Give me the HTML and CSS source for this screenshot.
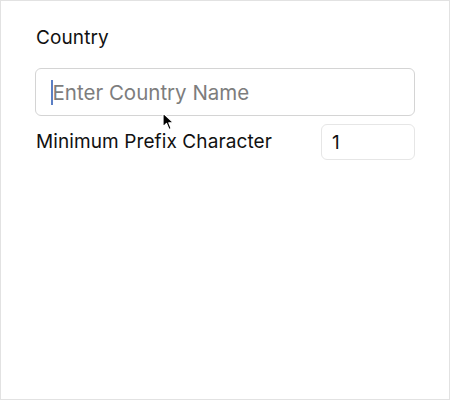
FILE: index.html
```html
<!DOCTYPE html>
<html>
<head>
<meta charset="utf-8">
<link rel="stylesheet" href="styles.css">
</head>
<body>
<div class="frame">
  <div class="form">
    <label class="label">Country</label>
    <div class="input main-input">
      <span class="caret"></span>
      <span class="placeholder">Enter Country Name</span>
    </div>
    <div class="row">
      <span class="label">Minimum Prefix Character</span>
      <div class="input small-input">1</div>
    </div>
  </div>
  <svg class="pointer" width="14" height="20" viewBox="0 0 14 20">
    <path d="M1 1 L1 15 L4.5 11.5 L7 17.5 L9.2 16.6 L6.8 10.8 L11.5 10.8 Z" fill="#000" stroke="#fff" stroke-width="1.2" stroke-linejoin="round"/>
  </svg>
</div>
</body>
</html>
```
FILE: styles.css
```css
html, body {
  margin: 0;
  padding: 0;
  background: #fff;
}
.frame {
  position: relative;
  box-sizing: border-box;
  width: 450px;
  height: 400px;
  border: 1px solid #e2e2e2;
  font-family: "Inter", "Liberation Sans", sans-serif;
  color: #111;
}
.form {
  padding: 26px 34px 0 34px;
  display: flex;
  flex-direction: column;
}
.label {
  font-size: 19px;
  line-height: 22px;
  padding-left: 1px;
  letter-spacing: 0.1px;
}
.input {
  box-sizing: border-box;
  border: 1px solid #d4d4d4;
  border-radius: 6px;
  background: #fff;
  display: flex;
  align-items: center;
}
.main-input {
  margin-top: 19px;
  height: 48px;
  padding-left: 15px;
  position: relative;
}
.caret {
  width: 1.5px;
  height: 25px;
  background: #5b7fc4;
  margin-right: 0;
}
.placeholder {
  font-size: 20.5px;
  color: #7d7d7d;
}
.row {
  margin-top: 8px;
  display: flex;
  align-items: center;
  justify-content: space-between;
}
.small-input {
  width: 94px;
  height: 36px;
  padding-left: 10px;
  font-size: 19px;
  border-color: #e6e6e6;
}
.pointer {
  position: absolute;
  left: 161px;
  top: 111px;
}
```
